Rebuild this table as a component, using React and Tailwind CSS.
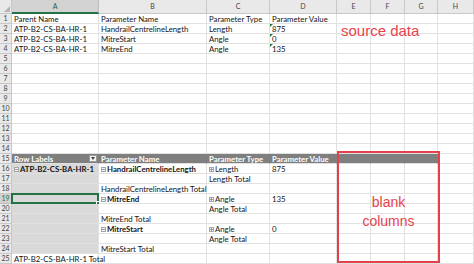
import React from 'react';

// column widths, row header first
const colW = ['w-[12px]', 'w-[87px]', 'w-[108px]', 'w-[63px]', 'w-[67px]', 'w-[34px]', 'w-[34px]', 'w-[33px]', 'w-[36px]'];
const letters = ['A', 'B', 'C', 'D', 'E', 'F', 'G', 'H'];

const sourceRows = [
    ['Parent Name', 'Parameter Name', 'Parameter Type', 'Parameter Value'],
    ['ATP-B2-CS-BA-HR-1', 'HandrailCentrelineLength', 'Length', '875'],
    ['ATP-B2-CS-BA-HR-1', 'MitreStart', 'Angle', '0'],
    ['ATP-B2-CS-BA-HR-1', 'MitreEnd', 'Angle', '135'],
];

// pivot body rows 16..24: [A, B, C, D]; objects mark bold / toggle boxes
const pivotRows = [
    [{ t: 'ATP-B2-CS-BA-HR-1', minus: true }, { t: 'HandrailCentrelineLength', minus: true }, { t: 'Length', plus: true }, '875'],
    ['', '', 'Length Total', ''],
    ['', 'HandrailCentrelineLength Total', '', ''],
    ['', { t: 'MitreEnd', minus: true }, { t: 'Angle', plus: true }, '135'],
    ['', '', 'Angle Total', ''],
    ['', 'MitreEnd Total', '', ''],
    ['', { t: 'MitreStart', minus: true }, { t: 'Angle', plus: true }, '0'],
    ['', '', 'Angle Total', ''],
    ['', 'MitreStart Total', '', ''],
];

const Toggle = ({ plus }) => (
    <svg width="5" height="5" viewBox="0 0 5 5" className="inline-block mr-[1px] mb-[1px] align-middle">
        <rect x="0.5" y="0.5" width="4" height="4" fill="#f4f4f4" stroke="#a6a6a6" />
        <line x1="1.2" y1="2.5" x2="3.8" y2="2.5" stroke="#7a7a7a" strokeWidth="0.8" />
        {plus && <line x1="2.5" y1="1.2" x2="2.5" y2="3.8" stroke="#7a7a7a" strokeWidth="0.8" />}
    </svg>
);

const RowHead = ({ n, active }) => (
    <div
        className={`${colW[0]} shrink-0 h-full border-r border-b text-center text-[7px] leading-[9px] ${
            active ? 'bg-[#d2d2d2] border-r-[#217346] border-b-[#bcbcbc] text-[#217346]' : 'bg-[#e9e9e9] border-[#c8c8c8] text-[#444]'
        }`}
    >
        {n}
    </div>
);

const Cell = ({ i, children, className = '' }) => (
    <div
        className={`${colW[i]} shrink-0 h-full border-r border-b border-[#e1e1e1] px-[2px] whitespace-nowrap leading-[10px] ${className}`}
    >
        {children}
    </div>
);

const renderPivot = (v) => {
    if (typeof v === 'string') return v;
    return (
        <span className={v.minus ? 'font-bold' : ''}>
            <Toggle plus={v.plus} />
            {v.t}
        </span>
    );
};

const App = () => {
    const rows = [];
    for (let r = 1; r <= 25; r++) rows.push(r);

    return (
        <div
            className="relative w-[474px] h-[264px] overflow-hidden bg-white text-[7.8px] text-[#151515]"
            style={{ fontFamily: 'Lato, "Open Sans", sans-serif' }}
        >
            {/* column headers */}
            <div className="flex h-[14px]">
                <div className={`${colW[0]} shrink-0 h-full bg-[#e9e9e9] border-r border-b border-[#c8c8c8] flex items-end justify-end pr-[1px] pb-[1px]`}>
                    <svg width="6" height="6" viewBox="0 0 6 6">
                        <polygon points="6,0 6,6 0,6" fill="#b4b4b4" />
                    </svg>
                </div>
                {letters.map((l, idx) => (
                    <div
                        key={l}
                        className={`${colW[idx + 1]} shrink-0 h-full border-r text-center text-[7px] leading-[12px] ${
                            l === 'A'
                                ? 'bg-[#d3d3d3] border-[#bcbcbc] border-b-2 border-b-[#217346] text-[#1e5e3a]'
                                : 'bg-[#e9e9e9] border-[#c8c8c8] border-b text-[#444]'
                        }`}
                    >
                        {l}
                    </div>
                ))}
            </div>

            {rows.map((r) => {
                if (r <= 14) {
                    const data = sourceRows[r - 1] || [];
                    return (
                        <div key={r} className="flex h-[10px]">
                            <RowHead n={r} />
                            {letters.map((l, idx) => (
                                <Cell key={l} i={idx + 1} className={idx === 3 && r > 1 && data[3] ? 'relative' : ''}>
                                    {idx === 3 && r > 1 && data[3] && (
                                        <span className="absolute left-0 top-0 w-0 h-0 border-t-[3px] border-r-[3px] border-t-[#1f7a3c] border-r-transparent" />
                                    )}
                                    {data[idx] || ''}
                                </Cell>
                            ))}
                        </div>
                    );
                }
                if (r === 15) {
                    return (
                        <div key={r} className="flex h-[10px]">
                            <RowHead n={r} />
                            {letters.map((l, idx) => (
                                <Cell
                                    key={l}
                                    i={idx + 1}
                                    className={idx < 7 ? 'bg-[#7f7f7f] border-r-[#7f7f7f] border-b-[#e1e1e1] text-white font-bold relative' : ''}
                                >
                                    {['Row Labels', 'Parameter Name', 'Parameter Type', 'Parameter Value'][idx] || ''}
                                    {idx === 0 && (
                                        <span className="absolute right-[1px] top-[1px] w-[8px] h-[7px] bg-[#f3f3f3] border border-[#9a9a9a] flex items-center justify-center">
                                            <span className="w-0 h-0 border-l-[2px] border-r-[2px] border-t-[3px] border-l-transparent border-r-transparent border-t-[#444]" />
                                        </span>
                                    )}
                                </Cell>
                            ))}
                        </div>
                    );
                }
                if (r === 25) {
                    return (
                        <div key={r} className="flex h-[10px]">
                            <RowHead n={r} />
                            {letters.map((l, idx) => (
                                <Cell key={l} i={idx + 1}>
                                    {idx === 0 ? 'ATP-B2-CS-BA-HR-1 Total' : ''}
                                </Cell>
                            ))}
                        </div>
                    );
                }
                const data = pivotRows[r - 16];
                const selected = r === 19;
                return (
                    <div key={r} className="flex h-[10px]">
                        <RowHead n={r} active={selected} />
                        {letters.map((l, idx) => (
                            <Cell
                                key={l}
                                i={idx + 1}
                                className={
                                    idx === 0
                                        ? `bg-[#d9d9d9] border-[#d9d9d9] relative ${r === 24 ? 'border-b-[#e1e1e1]' : ''}`
                                        : ''
                                }
                            >
                                {idx < 4 ? renderPivot(data[idx]) : ''}
                                {idx === 0 && selected && (
                                    <span className="absolute -left-[1px] -top-[1px] -right-[1px] -bottom-[1px] border-2 border-[#217346]">
                                        <span className="absolute -right-[3px] -bottom-[3px] w-[4px] h-[4px] bg-[#217346] border border-white" />
                                    </span>
                                )}
                            </Cell>
                        ))}
                    </div>
                );
            })}

            {/* annotations */}
            <div
                className="absolute left-[341px] top-[22px] text-[15px] leading-[18px] text-[#e8434d]"
                style={{ fontFamily: '"Liberation Sans", Arial, sans-serif' }}
            >
                source data
            </div>
            <div className="absolute left-[337px] top-[151px] w-[103px] h-[112px] border-2 border-[#e5414b]" />
            <div
                className="absolute left-[337px] top-[193px] w-[103px] text-center text-[14px] leading-[19px] text-[#e8434d]"
                style={{ fontFamily: '"Liberation Sans", Arial, sans-serif' }}
            >
                blank
                <br />
                columns
            </div>
        </div>
    );
};

export default App;
